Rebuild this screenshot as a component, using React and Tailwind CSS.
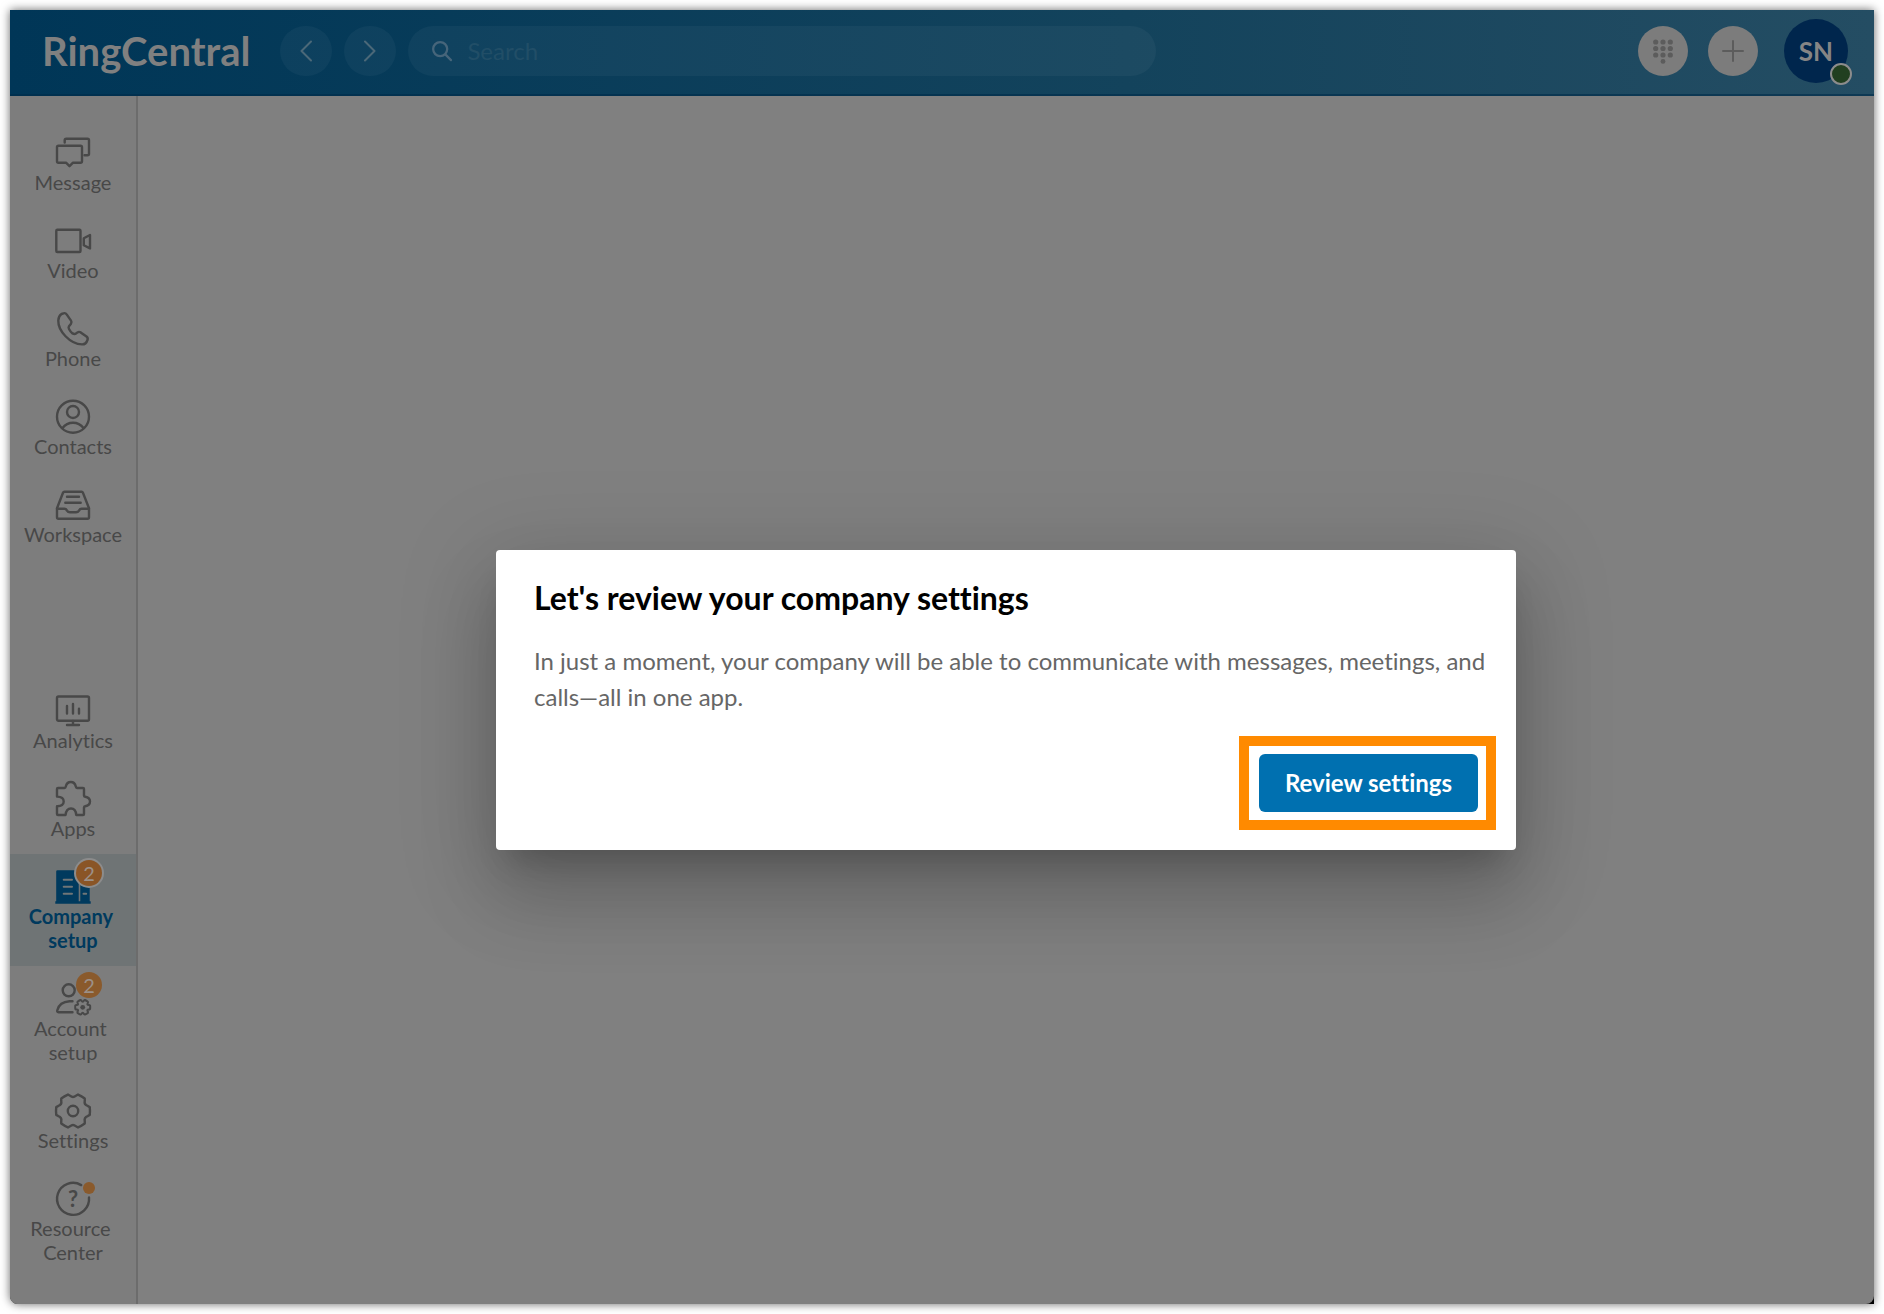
import React from 'react';
import clsx from 'clsx';

// six-lobed cog outline centred on (cx, cy)
const cogPath = (cx, cy, outer, inner) => {
  const at = (deg, r) => {
    const rad = (deg * Math.PI) / 180;
    return `${(cx + r * Math.cos(rad)).toFixed(2)} ${(cy + r * Math.sin(rad)).toFixed(2)}`;
  };
  const parts = [0, 60, 120, 180, 240, 300].map(
    (a) =>
      `${a === 0 ? 'M' : 'L'}${at(a - 13, outer)} Q${at(a, outer)} ${at(a + 13, outer)} L${at(a + 19, inner + 1)} Q${at(a + 30, inner - 2)} ${at(a + 41, inner + 1)}`
  );
  return `${parts.join(' ')} Z`;
};

function Icon({ children }) {
  return (
    <svg
      className="size-9 overflow-visible"
      viewBox="0 0 36 36"
      fill="none"
      stroke="currentColor"
      strokeWidth="2.4"
      strokeLinecap="round"
      strokeLinejoin="round"
      aria-hidden="true"
    >
      {children}
    </svg>
  );
}

const icons = {
  message: (
    <Icon>
      <path d="M9.7 8.5 V6.2 Q9.7 4.7 11.2 4.7 H32.5 Q34 4.7 34 6.2 V19.8 Q34 21.3 32.5 21.3 H29.5" />
      <path d="M3.5 11.7 H25.5 Q27 11.7 27 13.2 V27.2 Q27 28.7 25.5 28.7 H18 L14.5 32.2 L11 28.7 H3.5 Q2 28.7 2 27.2 V13.2 Q2 11.7 3.5 11.7 Z" />
    </Icon>
  ),
  video: (
    <Icon>
      <rect x="1.3" y="7.8" width="24.2" height="22.2" rx="1" />
      <path d="M28.8 16.3 L35 13 V26.4 L28.8 23.2 Z" />
    </Icon>
  ),
  phone: (
    <Icon>
      <path d="M6.5 4 L8.5 3.3 Q10.5 2.7 11.8 4.6 L16 10.6 Q17 12 16 13.7 L14 16.2 Q13.2 17.4 14 19 Q15.5 22 17.5 23.4 Q19.5 24.6 21 23.5 L22.5 22.4 Q24 21.4 25.7 22.4 L31.5 26.5 Q33.3 28 32.5 30 Q31 34.5 27 34.4 C15 34 3 21 3.3 10.5 Q3.5 6 6.5 4 Z" />
    </Icon>
  ),
  contacts: (
    <Icon>
      <circle cx="18" cy="18.7" r="16" />
      <circle cx="18" cy="14" r="6" />
      <path d="M7.5 30 Q11.5 24.7 18 24.7 Q24.5 24.7 28.5 30" />
    </Icon>
  ),
  workspace: (
    <Icon>
      <path d="M9.5 5.7 H26.5 Q27.6 5.7 28 6.8 L34 22.3 V31.2 Q34 32.7 32.5 32.7 H3.5 Q2 32.7 2 31.2 V22.3 L8 6.8 Q8.4 5.7 9.5 5.7 Z" />
      <path d="M2 22.8 H9.5 Q11 22.8 12 24.6 Q13 26.3 15 26.3 H21 Q23 26.3 24 24.6 Q25 22.8 26.5 22.8 H34" />
      <path d="M12 10.8 H24 M10.3 16.7 H25.7" />
    </Icon>
  ),
  analytics: (
    <Icon>
      <rect x="2" y="4.5" width="32" height="24.3" rx="1.5" />
      <path d="M18 29 V33 M12 33 H24" />
      <path d="M12 14 V21.5 M18 12 V21.5 M24 16.8 V21.5" />
    </Icon>
  ),
  apps: (
    <Icon>
      <path d="M3 8 H9.5 Q10.5 8 10.8 6.5 Q11.8 2 15.8 2 Q19.8 2 20.8 6.5 Q21.1 8 22 8 H28 Q29 8 29 9 V15.5 Q29 16.6 30.2 16.8 Q35 17.6 35 21.5 Q35 25.4 30.2 26.2 Q29 26.4 29 27.5 V34 Q29 35 28 35 H21.2 Q20.8 28.5 16 28.5 Q11.2 28.5 10.6 35 H3 Q2 35 2 34 V26.2 Q8.7 26.3 8.7 21.5 Q8.7 16.7 2 16.6 V9 Q2 8 3 8 Z" />
    </Icon>
  ),
  company: (
    <Icon>
      <path
        d="M2.5 2.3 H22.5 Q23.7 2.3 23.7 3.5 V33.2 H25.3 V16.5 H33.5 Q34.7 16.5 34.7 17.7 V33.2 H35.7 V35.7 H0.3 V33.2 H1.2 V3.5 Q1.2 2.3 2.5 2.3 Z"
        fill="currentColor"
        stroke="none"
      />
      <path
        d="M8.7 11.7 H17 M8.7 18.7 H17 M8.7 25.7 H17 M28.5 25.7 H31.2"
        stroke="#707677"
        strokeWidth="2"
      />
    </Icon>
  ),
  account: (
    <Icon>
      <circle cx="13.7" cy="10.3" r="6" />
      <path d="M17.5 21.3 H14.5 Q4.5 22 2.3 30.2 Q1.8 32.3 3.5 32.3 H17.5" />
      <path d={cogPath(27.7, 27.3, 7.6, 6)} strokeWidth="2" />
      <circle cx="27.7" cy="27.3" r="2.4" fill="currentColor" stroke="none" />
    </Icon>
  ),
  settings: (
    <Icon>
      <path d={cogPath(18, 19, 17.2, 14.6)} />
      <circle cx="18" cy="19" r="5.2" />
    </Icon>
  ),
  resource: (
    <Icon>
      <path d="M26.2 5.1 A16 16 0 1 0 34 17.5" />
      <text
        x="18"
        y="27"
        textAnchor="middle"
        fontSize="22"
        fontWeight="700"
        fill="currentColor"
        stroke="none"
      >
        ?
      </text>
    </Icon>
  ),
};

const mainItems = [
  { label: 'Message', icon: icons.message },
  { label: 'Video', icon: icons.video },
  { label: 'Phone', icon: icons.phone },
  { label: 'Contacts', icon: icons.contacts },
  { label: 'Workspace', icon: icons.workspace },
];

const adminItems = [
  { label: 'Analytics', icon: icons.analytics },
  { label: 'Apps', icon: icons.apps },
  { label: 'Company \nsetup', icon: icons.company, badge: 2, active: true },
  { label: 'Account \nsetup', icon: icons.account, badge: 2 },
  { label: 'Settings', icon: icons.settings },
  { label: 'Resource \nCenter', icon: icons.resource, dot: true },
];

function NavItem({ label, icon, badge, dot, active }) {
  return (
    <li>
      <a
        href="#"
        aria-current={active ? 'page' : undefined}
        className={clsx(
          'flex flex-col items-center py-3.5 text-center text-xl leading-6 whitespace-pre',
          active ? 'bg-[#6f7475] font-bold text-[#003a5e]' : 'text-[#484848]'
        )}
      >
        <span className="relative">
          {icon}
          {badge && (
            <span
              className={clsx(
                'absolute -top-2 left-[21px] flex size-[26px] items-center justify-center rounded-full text-xl leading-none font-normal text-[#9c9088]',
                active ? 'bg-[#8a5526] ring-2 ring-[#8c8c8c]' : 'bg-[#8a5a2c]'
              )}
            >
              {badge}
            </span>
          )}
          {dot && (
            <span className="absolute top-0.5 -right-1 size-3 rounded-full bg-[#8a5a2c]" />
          )}
        </span>
        {label}
      </a>
    </li>
  );
}

function Sidebar() {
  return (
    <nav className="flex w-32 shrink-0 flex-col justify-between gap-8 border-r-2 border-[#6c6c6c] bg-[#7d7d7d] pt-6 pb-[26px]">
      <ul>
        {mainItems.map((item) => (
          <NavItem key={item.label} {...item} />
        ))}
      </ul>
      <ul>
        {adminItems.map((item) => (
          <NavItem key={item.label} {...item} />
        ))}
      </ul>
    </nav>
  );
}

function RoundButton({ label, className, children }) {
  return (
    <button
      type="button"
      aria-label={label}
      className={clsx('flex h-[50px] items-center justify-center rounded-full', className)}
    >
      {children}
    </button>
  );
}

function Header() {
  return (
    <header className="flex h-[86px] items-center border-b-2 border-[#002b4a]/60 bg-linear-to-r from-[#003657] via-[#13435c] via-60% to-[#244d63] pr-[26px] pb-0.5 pl-8">
      <span className="text-[40px] leading-none font-bold text-[#808080]">RingCentral</span>
      <div className="ml-[30px] flex flex-1 gap-3">
        <RoundButton label="Back" className="w-[52px] bg-white/4">
          <svg width="12" height="22" viewBox="0 0 12 22" fill="none" stroke="#4b6878" strokeWidth="2" strokeLinecap="round" strokeLinejoin="round">
            <path d="M11 1.5 L1.5 11 L11 20.5" />
          </svg>
        </RoundButton>
        <RoundButton label="Forward" className="w-[52px] bg-white/4">
          <svg width="12" height="22" viewBox="0 0 12 22" fill="none" stroke="#4b6878" strokeWidth="2" strokeLinecap="round" strokeLinejoin="round">
            <path d="M1 1.5 L10.5 11 L1 20.5" />
          </svg>
        </RoundButton>
        <label className="flex h-[50px] max-w-[748px] flex-1 items-center gap-3.5 rounded-full bg-white/4 px-6">
          <svg width="22" height="22" viewBox="0 0 22 22" fill="none" stroke="#46657a" strokeWidth="2.4" strokeLinecap="round">
            <circle cx="8.6" cy="9" r="7.4" />
            <path d="M14 14.6 L20 20.6" />
          </svg>
          <input
            type="search"
            aria-label="Search"
            placeholder="Search"
            className="w-full bg-transparent text-2xl outline-none placeholder:text-[#214e67]"
          />
        </label>
      </div>
      <div className="flex items-center gap-5">
        <RoundButton label="Dial pad" className="w-[50px] bg-[#7c7c7c]">
          <svg width="20" height="25" viewBox="0 0 20 25" fill="#5c5c5c">
            {[3, 9.5, 16].map((y) =>
              [2.7, 10, 17.3].map((x) => <circle key={`${x}-${y}`} cx={x} cy={y} r="2.6" />)
            )}
            <circle cx="10" cy="22.4" r="2.4" />
          </svg>
        </RoundButton>
        <RoundButton label="New" className="w-[50px] bg-[#7c7c7c]">
          <svg width="22" height="22" viewBox="0 0 22 22" stroke="#5c5c5c" strokeWidth="2" strokeLinecap="round">
            <path d="M11 1 V21 M1 11 H21" />
          </svg>
        </RoundButton>
        <button
          type="button"
          className="relative ml-1.5 size-16 rounded-full bg-[#00264d] text-[26px] font-bold text-[#858585]"
        >
          SN
          <span className="absolute -right-1 -bottom-0.5 size-[22px] rounded-full border-2 border-[#8c8c8c] bg-[#213f20]" />
        </button>
      </div>
    </header>
  );
}

function ReviewDialog() {
  return (
    <section
      role="dialog"
      aria-labelledby="review-title"
      className="flex w-full max-w-[1020px] flex-col rounded bg-white p-5 shadow-[0_22px_30px_-14px_rgba(0,0,0,0.2),0_48px_76px_6px_rgba(0,0,0,0.14),0_18px_92px_16px_rgba(0,0,0,0.12)]"
    >
      <div className="pt-2 pl-[18px]">
        <h1 id="review-title" className="text-[32px] leading-10 font-bold text-black">
          Let's review your company settings
        </h1>
        <p className="mt-[25px] text-2xl leading-9 text-[#666]">
          In just a moment, your company will be able to communicate with messages, meetings, and
          calls—all in one app.
        </p>
      </div>
      <div className="mt-[21px] self-end border-10 border-[#ff8a00] py-2 pr-2 pl-2.5">
        <button
          type="button"
          className="h-[58px] rounded-md bg-[#0070b0] px-[26px] text-2xl font-bold whitespace-nowrap text-white"
        >
          Review settings
        </button>
      </div>
    </section>
  );
}

export default function App() {
  return (
    <div className="flex min-h-screen bg-white p-2.5 font-['Lato',sans-serif] [font-variant-ligatures:none]">
      <div className="flex flex-1 rounded-bl-lg bg-black shadow-[0_0_10px_rgba(0,0,0,0.6)]">
        <div className="flex flex-1 flex-col overflow-hidden rounded-b-lg bg-[#808080]">
          <Header />
          <div className="flex flex-1">
            <Sidebar />
            <main className="flex flex-1 items-center justify-center">
              <ReviewDialog />
            </main>
          </div>
        </div>
      </div>
    </div>
  );
}
